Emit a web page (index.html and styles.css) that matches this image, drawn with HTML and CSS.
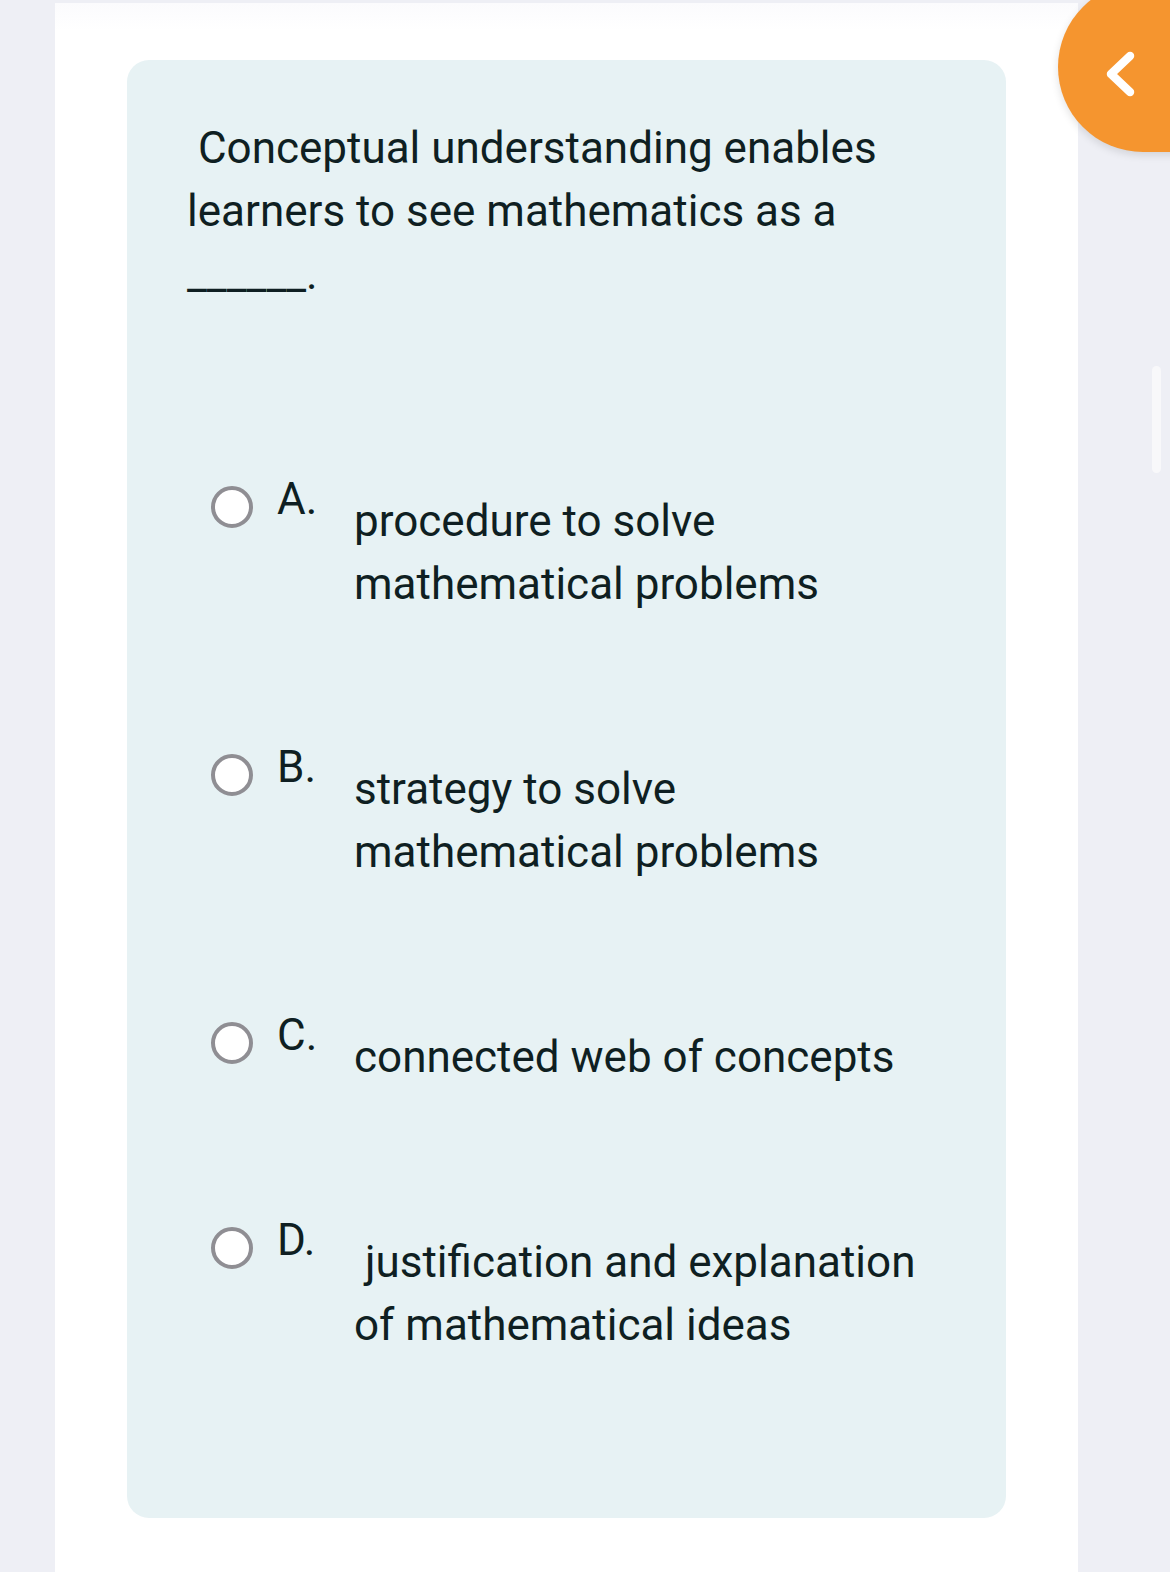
FILE: index.html
```html
<!DOCTYPE html>
<html lang="en">
<head>
<meta charset="utf-8">
<title>Question</title>
<link rel="stylesheet" href="styles.css">
</head>
<body>
<div class="page">
  <main class="panel">
    <section class="card">
      <div class="question">&nbsp;Conceptual understanding enables learners to see mathematics as a ______.</div>
      <div class="options">
        <div class="option">
          <span class="radio"></span>
          <span class="letter">A.</span>
          <div class="text">procedure to solve<br>mathematical problems</div>
        </div>
        <div class="option">
          <span class="radio"></span>
          <span class="letter">B.</span>
          <div class="text">strategy to solve<br>mathematical problems</div>
        </div>
        <div class="option">
          <span class="radio"></span>
          <span class="letter">C.</span>
          <div class="text">connected web of concepts</div>
        </div>
        <div class="option">
          <span class="radio"></span>
          <span class="letter">D.</span>
          <div class="text">&nbsp;justification and explanation<br>of mathematical ideas</div>
        </div>
      </div>
    </section>
  </main>
</div>
<button class="back" aria-label="Back">
  <svg width="40" height="52" viewBox="0 0 40 52"><path d="M26 6 L7 24 L26 42" fill="none" stroke="#fff" stroke-width="8.5" stroke-linecap="round" stroke-linejoin="round"/></svg>
</button>
<div class="scroll-thumb"></div>
</body>
</html>
```
FILE: styles.css
```css
html, body {
  margin: 0;
  padding: 0;
}
body {
  background: #f1f2f6;
  font-family: Roboto, "Liberation Sans", Arial, sans-serif;
  color: #0f1f22;
  width: 1170px;
  height: 1572px;
  overflow: hidden;
  position: relative;
}
.page {
  padding-top: 3px;
  background: #eeeff5;
}
.panel {
  margin-left: 55px;
  width: 1023px;
  height: 1569px;
  background: linear-gradient(#fbfbfd 0, #ffffff 28px);
  padding-top: 57px;
  box-sizing: border-box;
}
.card {
  margin-left: 72px;
  width: 879px;
  height: 1458px;
  box-sizing: border-box;
  background: #e7f2f4;
  border-radius: 22px;
  padding: 57px 60px 0 60px;
}
.question {
  font-size: 44px;
  line-height: 63px;
  width: 720px;
}
.options {
  margin-top: 162px;
  display: flex;
  flex-direction: column;
  gap: 120px;
}
.option {
  display: flex;
  align-items: flex-start;
  font-size: 44px;
  line-height: 63px;
}
.radio {
  flex: none;
  width: 34px;
  height: 34px;
  border: 4px solid #8f8e93;
  border-radius: 50%;
  background: #ffffff;
  margin: 18px 0 0 24px;
}
.letter {
  flex: none;
  width: 77px;
  margin-left: 24px;
}
.text {
  padding-top: 22px;
  white-space: nowrap;
}
.back {
  position: absolute;
  left: 1058px;
  top: -18px;
  width: 160px;
  height: 170px;
  border: none;
  padding: 0 0 0 46px;
  margin: 0;
  background: #f5952f;
  border-radius: 85px 0 0 85px;
  box-shadow: 0 3px 8px rgba(0,0,0,0.12);
  display: flex;
  align-items: center;
  justify-content: flex-start;
}
.back svg {
  display: block;
  margin-top: 17px;
}
.scroll-thumb {
  position: absolute;
  left: 1152px;
  top: 366px;
  width: 9px;
  height: 107px;
  border-radius: 5px;
  background: #f8f8fa;
}
```
